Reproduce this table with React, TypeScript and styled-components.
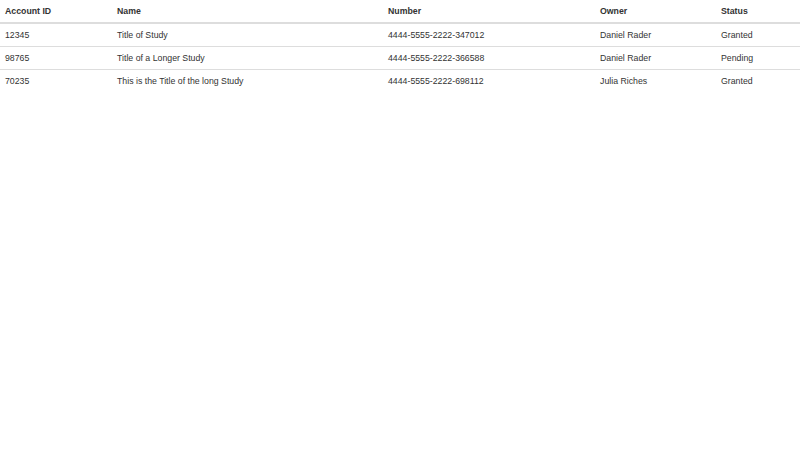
import React from "react";
import styled, { createGlobalStyle } from "styled-components";

const Global = createGlobalStyle`
  html, body { margin: 0; padding: 0; background: #fff; }
  body {
    font-family: "Liberation Sans", Arial, Helvetica, sans-serif;
    font-size: 8.75px;
    line-height: 12px;
    color: #333;
  }
  *, *::before, *::after { box-sizing: border-box; }
`;

const Table = styled.table`
  width: 100%;
  border-collapse: collapse;
  border-spacing: 0;
  table-layout: fixed;
`;

const Th = styled.th<{ $w: number }>`
  width: ${(p) => p.$w}px;
  text-align: left;
  font-weight: bold;
  padding: 5px;
  vertical-align: bottom;
  border-bottom: 2px solid #ddd;
`;

const Td = styled.td`
  padding: 5px;
  vertical-align: top;
  border-top: 1px solid #ddd;
  white-space: nowrap;
`;

const Row = styled.tr`
  &:first-child td { border-top: 0; }
`;

const cols = [
  { label: "Account ID", w: 112 },
  { label: "Name", w: 271 },
  { label: "Number", w: 212 },
  { label: "Owner", w: 121 },
  { label: "Status", w: 84 },
];

const rows = [
  ["12345", "Title of Study", "4444-5555-2222-347012", "Daniel Rader", "Granted"],
  ["98765", "Title of a Longer Study", "4444-5555-2222-366588", "Daniel Rader", "Pending"],
  ["70235", "This is the Title of the long Study", "4444-5555-2222-698112", "Julia Riches", "Granted"],
];

export default function App() {
  return (
    <>
      <Global />
      <Table>
        <thead>
          <tr>
            {cols.map((c) => (
              <Th key={c.label} $w={c.w}>
                {c.label}
              </Th>
            ))}
          </tr>
        </thead>
        <tbody>
          {rows.map((r) => (
            <Row key={r[0]}>
              {r.map((cell, i) => (
                <Td key={i}>{cell}</Td>
              ))}
            </Row>
          ))}
        </tbody>
      </Table>
    </>
  );
}
